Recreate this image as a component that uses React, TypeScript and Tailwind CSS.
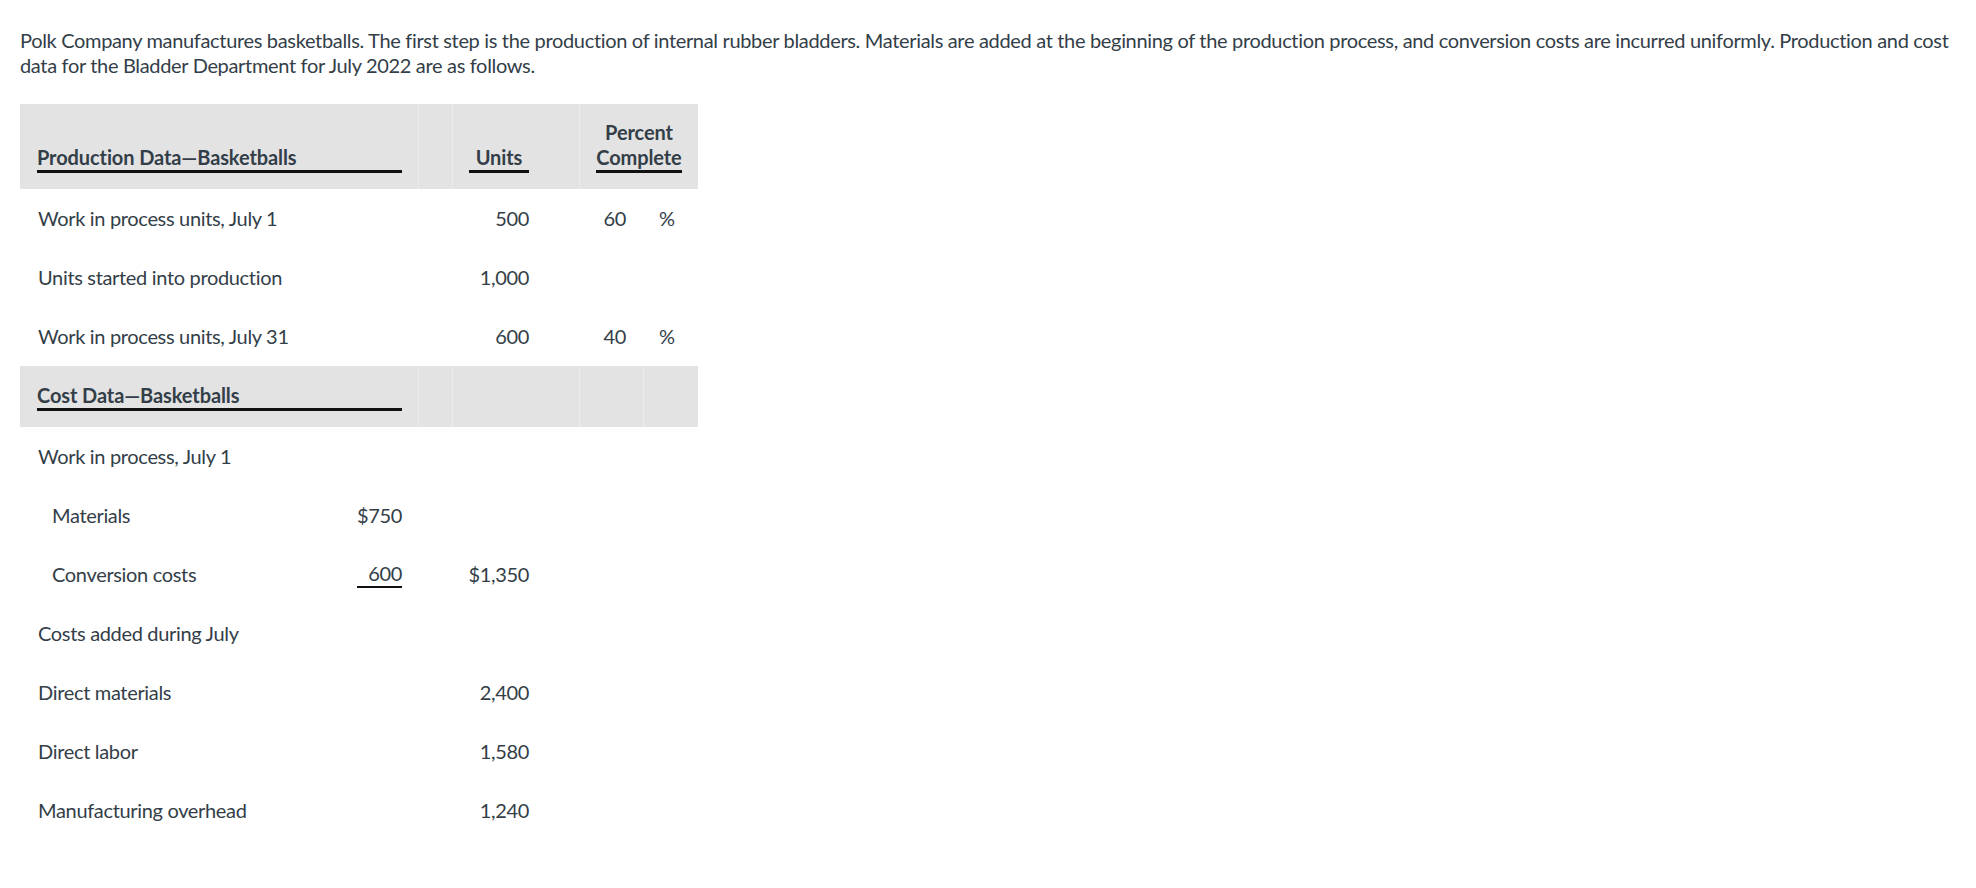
import React from "react";

const txt = "text-[#333e48]";

function Row({
  label,
  indent = false,
  amount,
  amountUnderline = false,
  units,
  pct,
}: {
  label: string;
  indent?: boolean;
  amount?: string;
  amountUnderline?: boolean;
  units?: string;
  pct?: string;
}) {
  return (
    <div className="grid grid-cols-[398px_34px_127px_64px_55px] h-[59px] items-center">
      <div className={`flex items-center justify-between pr-[16px] ${indent ? "pl-[32px]" : "pl-[18px]"}`}>
        <span>{label}</span>
        {amount !== undefined && (
          <span
            className={`w-[45px] text-right ${amountUnderline ? "border-b-2 border-[#111]" : ""}`}
          >
            {amount}
          </span>
        )}
      </div>
      <div />
      <div className="text-right pr-[50px]">{units}</div>
      <div className="text-right pr-[17px]">{pct}</div>
      <div className="pl-[16px]">{pct ? "%" : ""}</div>
    </div>
  );
}

export default function App() {
  return (
    <div
      className={`min-h-[888px] bg-white ${txt} text-[20px] leading-[25px] tracking-[-0.33px]`}
      style={{ fontFamily: "Lato, 'Open Sans', sans-serif" }}
    >
      <div className="pt-[28px] px-[20px]">
        <p className="whitespace-nowrap">
          Polk Company manufactures basketballs. The first step is the production of internal rubber bladders. Materials are added at the beginning of the production process, and conversion costs are incurred uniformly. Production and cost
          <br />
          data for the Bladder Department for July 2022 are as follows.
        </p>

        <div className="mt-[26px] w-[678px]">
          {/* Header row */}
          <div className="grid grid-cols-[398px_34px_127px_119px] h-[85px] bg-[#e3e3e3] font-bold tracking-[-0.1px]">
            <div className="flex items-end pl-[17px] pr-[16px] pb-[16px]">
              <div className="w-full border-b-[3px] border-[#111]">Production Data—Basketballs</div>
            </div>
            <div className="border-l border-[#ebebeb]" />
            <div className="border-l border-[#ebebeb] flex items-end justify-end pr-[50px] pb-[16px]">
              <div className="w-[60px] text-center border-b-[3px] border-[#111]">Units</div>
            </div>
            <div className="border-l border-[#ebebeb] flex flex-col items-center justify-end pb-[16px]">
              <div>Percent</div>
              <div className="border-b-[3px] border-[#111]">Complete</div>
            </div>
          </div>

          <Row label="Work in process units, July 1" units="500" pct="60" />
          <Row label="Units started into production" units="1,000" />
          <Row label="Work in process units, July 31" units="600" pct="40" />

          {/* Cost header row */}
          <div className="grid grid-cols-[398px_34px_127px_64px_55px] h-[61px] bg-[#e3e3e3] font-bold tracking-[-0.1px]">
            <div className="flex items-end pl-[17px] pr-[16px] pb-[16px]">
              <div className="w-full border-b-[3px] border-[#111]">Cost Data—Basketballs</div>
            </div>
            <div className="border-l border-[#ebebeb]" />
            <div className="border-l border-[#ebebeb]" />
            <div className="border-l border-[#ebebeb]" />
            <div className="border-l border-[#ebebeb]" />
          </div>

          <Row label="Work in process, July 1" />
          <Row label="Materials" indent amount="$750" />
          <Row label="Conversion costs" indent amount="600" amountUnderline units="$1,350" />
          <Row label="Costs added during July" />
          <Row label="Direct materials" units="2,400" />
          <Row label="Direct labor" units="1,580" />
          <Row label="Manufacturing overhead" units="1,240" />
        </div>
      </div>
    </div>
  );
}
